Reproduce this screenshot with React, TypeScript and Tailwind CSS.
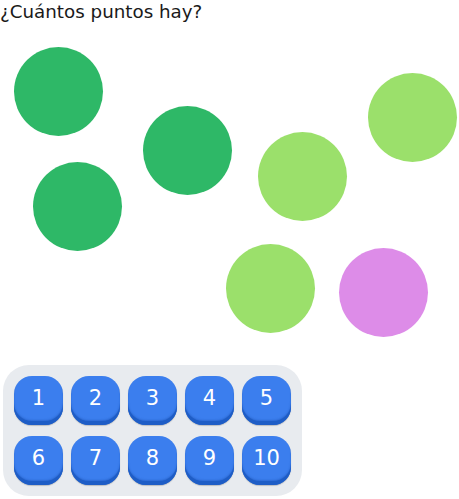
const dots = [
  { left: 14, top: 47, color: 'bg-[#2eb867]' },
  { left: 33, top: 162, color: 'bg-[#2eb867]' },
  { left: 143, top: 106, color: 'bg-[#2eb867]' },
  { left: 258, top: 132, color: 'bg-[#9be06b]' },
  { left: 368, top: 73, color: 'bg-[#9be06b]' },
  { left: 226, top: 244, color: 'bg-[#9be06b]' },
  { left: 339, top: 248, color: 'bg-[#dd8ce8]' },
]

const answers = [1, 2, 3, 4, 5, 6, 7, 8, 9, 10]

export default function App() {
  return (
    <div className="relative h-[499px] w-[459px] overflow-hidden bg-white font-['DejaVu_Sans',sans-serif] text-[#1a1a1a]">
      <h1 className="pt-[1px] text-[18.3px] leading-[21px]">¿Cuántos puntos hay?</h1>

      {/* free canvas of dots to count */}
      <div className="relative h-[343px]">
        {dots.map((d, i) => (
          <span
            key={i}
            className={`absolute h-[89px] w-[89px] rounded-full ${d.color}`}
            style={{ left: d.left, top: d.top - 22 }}
          />
        ))}
      </div>

      <div className="ml-[3px] w-[299px] rounded-[26px] bg-[#e8ebef] px-[11px] pt-[11px] pb-[11px]">
        <div className="grid grid-cols-5 gap-x-[8px] gap-y-[11px]">
          {answers.map((n) => (
            <button
              key={n}
              className="flex h-[49px] w-[49px] items-center justify-center rounded-[18px] bg-[#3b7eee] pb-[3px] text-[21px] text-white shadow-[inset_0_-4px_0_#1e5dc6,inset_0_-5px_2px_rgba(20,70,160,0.35),0_1px_1px_rgba(0,0,0,0.2)]"
            >
              {n}
            </button>
          ))}
        </div>
      </div>
    </div>
  )
}
